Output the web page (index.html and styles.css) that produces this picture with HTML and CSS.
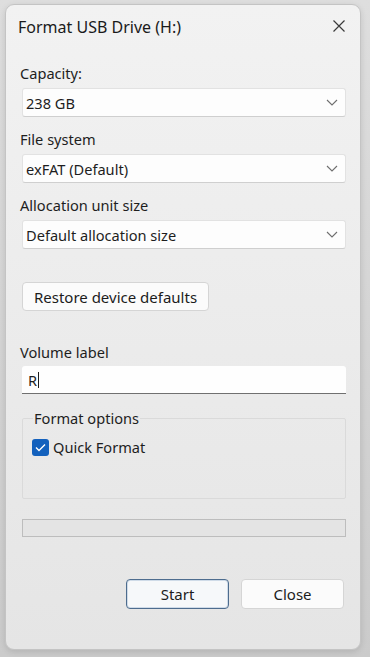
FILE: index.html
```html
<!DOCTYPE html>
<html>
<head>
<meta charset="utf-8">
<link rel="stylesheet" href="styles.css">
</head>
<body>
<div class="window">
  <div class="titlebar">
    <span class="title">Format USB Drive (H:)</span>
    <svg class="close-x" width="14" height="14" viewBox="0 0 14 14"><path d="M1.5 1.5 L12.5 12.5 M12.5 1.5 L1.5 12.5" stroke="#3a3a3a" stroke-width="1.2" fill="none"/></svg>
  </div>
  <div class="content">
    <div class="field-label first">Capacity:</div>
    <div class="combo"><span>238 GB</span><svg class="chev" width="12" height="7" viewBox="0 0 12 7"><path d="M1 1 L6 6 L11 1" stroke="#6e6e6e" stroke-width="1.1" fill="none"/></svg></div>

    <div class="field-label">File system</div>
    <div class="combo"><span>exFAT (Default)</span><svg class="chev" width="12" height="7" viewBox="0 0 12 7"><path d="M1 1 L6 6 L11 1" stroke="#6e6e6e" stroke-width="1.1" fill="none"/></svg></div>

    <div class="field-label">Allocation unit size</div>
    <div class="combo"><span>Default allocation size</span><svg class="chev" width="12" height="7" viewBox="0 0 12 7"><path d="M1 1 L6 6 L11 1" stroke="#6e6e6e" stroke-width="1.1" fill="none"/></svg></div>

    <div class="restore-row"><button class="btn restore">Restore device defaults</button></div>

    <div class="field-label volume">Volume label</div>
    <div class="textbox"><span>R</span><span class="caret"></span></div>

    <fieldset class="group">
      <legend>Format options</legend>
      <div class="check-row">
        <span class="checkbox"><svg width="11" height="9" viewBox="0 0 11 9"><path d="M1 4.5 L4 7.5 L10 1.5" stroke="#ffffff" stroke-width="1.4" fill="none"/></svg></span>
        <span>Quick Format</span>
      </div>
    </fieldset>

    <div class="progress"></div>

    <div class="actions">
      <button class="btn start">Start</button>
      <button class="btn close">Close</button>
    </div>
  </div>
</div>
</body>
</html>
```
FILE: styles.css
```css
html, body {
  margin: 0;
  padding: 0;
}
body {
  width: 370px;
  height: 657px;
  background: linear-gradient(#dedede, #cbcbcb);
  font-family: "Noto Sans", "Open Sans", sans-serif;
  font-size: 14.6px;
  color: #1e1e1e;
  overflow: hidden;
}
.window {
  box-sizing: border-box;
  margin: 4px 0 0 5px;
  width: 356px;
  height: 646px;
  border: 1px solid #c4c4c4;
  border-radius: 9px;
  background: linear-gradient(#f2f2f2, #e5e5e5);
  box-shadow: 0 2px 6px rgba(0,0,0,0.12);
}
.titlebar {
  height: 44px;
  display: flex;
  align-items: center;
  justify-content: space-between;
  padding: 0 14px 0 12px;
}
.title {
  font-size: 16px;
  color: #1a1a1a;
}
.close-x {
  display: block;
  margin-top: -3px;
}
.content {
  padding: 0 14px 0 16px;
}
.field-label {
  height: 18px;
  line-height: 18px;
  margin: 13px 0 6px -2px;
}
.field-label.first {
  margin-top: 15px;
}
.combo {
  box-sizing: border-box;
  height: 29px;
  background: #fdfdfd;
  border: 1px solid #e2e2e2;
  border-bottom-color: #cfcfcf;
  border-radius: 3px;
  display: flex;
  align-items: center;
  justify-content: space-between;
  padding: 0 7px 0 3px;
}
.chev {
  display: block;
}
.restore-row {
  margin-top: 33px;
}
.btn {
  box-sizing: border-box;
  height: 29px;
  font-family: inherit;
  font-size: 15px;
  color: #1c1c1c;
  background: #fbfbfb;
  border: 1px solid #d5d5d5;
  border-radius: 4px;
  padding: 0;
}
.restore {
  width: 187px;
}
.field-label.volume {
  margin-top: 32px;
  margin-bottom: 5px;
}
.textbox {
  box-sizing: border-box;
  height: 28px;
  background: #fefefe;
  border-bottom: 1px solid #707070;
  border-radius: 3px 3px 0 0;
  display: flex;
  align-items: center;
  padding-left: 6px;
}
.caret {
  width: 1px;
  height: 16px;
  background: #1c1c1c;
  margin-left: 1px;
}
.group {
  margin: 16px 0 0;
  padding: 11px 0 0 9px;
  height: 89px;
  box-sizing: border-box;
  border: 1px solid #dadada;
  border-radius: 2px;
  min-width: 0;
}
.group legend {
  padding: 0 1px;
  margin-left: 1px;
  line-height: 16px;
}
.check-row {
  display: flex;
  align-items: center;
  gap: 4px;
}
.checkbox {
  width: 17px;
  height: 17px;
  border-radius: 3px;
  background: #1361bd;
  display: flex;
  align-items: center;
  justify-content: center;
}
.checkbox svg {
  display: block;
}
.progress {
  box-sizing: border-box;
  height: 18px;
  margin-top: 20px;
  background: #e4e4e4;
  border: 1px solid #bdbdbd;
}
.actions {
  display: flex;
  justify-content: flex-end;
  gap: 12px;
  margin-top: 42px;
  margin-right: 2px;
}
.start, .close {
  width: 103px;
  height: 30px;
}
.start {
  border: 1px solid #4d6c8e;
  box-shadow: inset 0 0 0 1px #cfdbe8;
  background: #f6f8fa;
}
```
